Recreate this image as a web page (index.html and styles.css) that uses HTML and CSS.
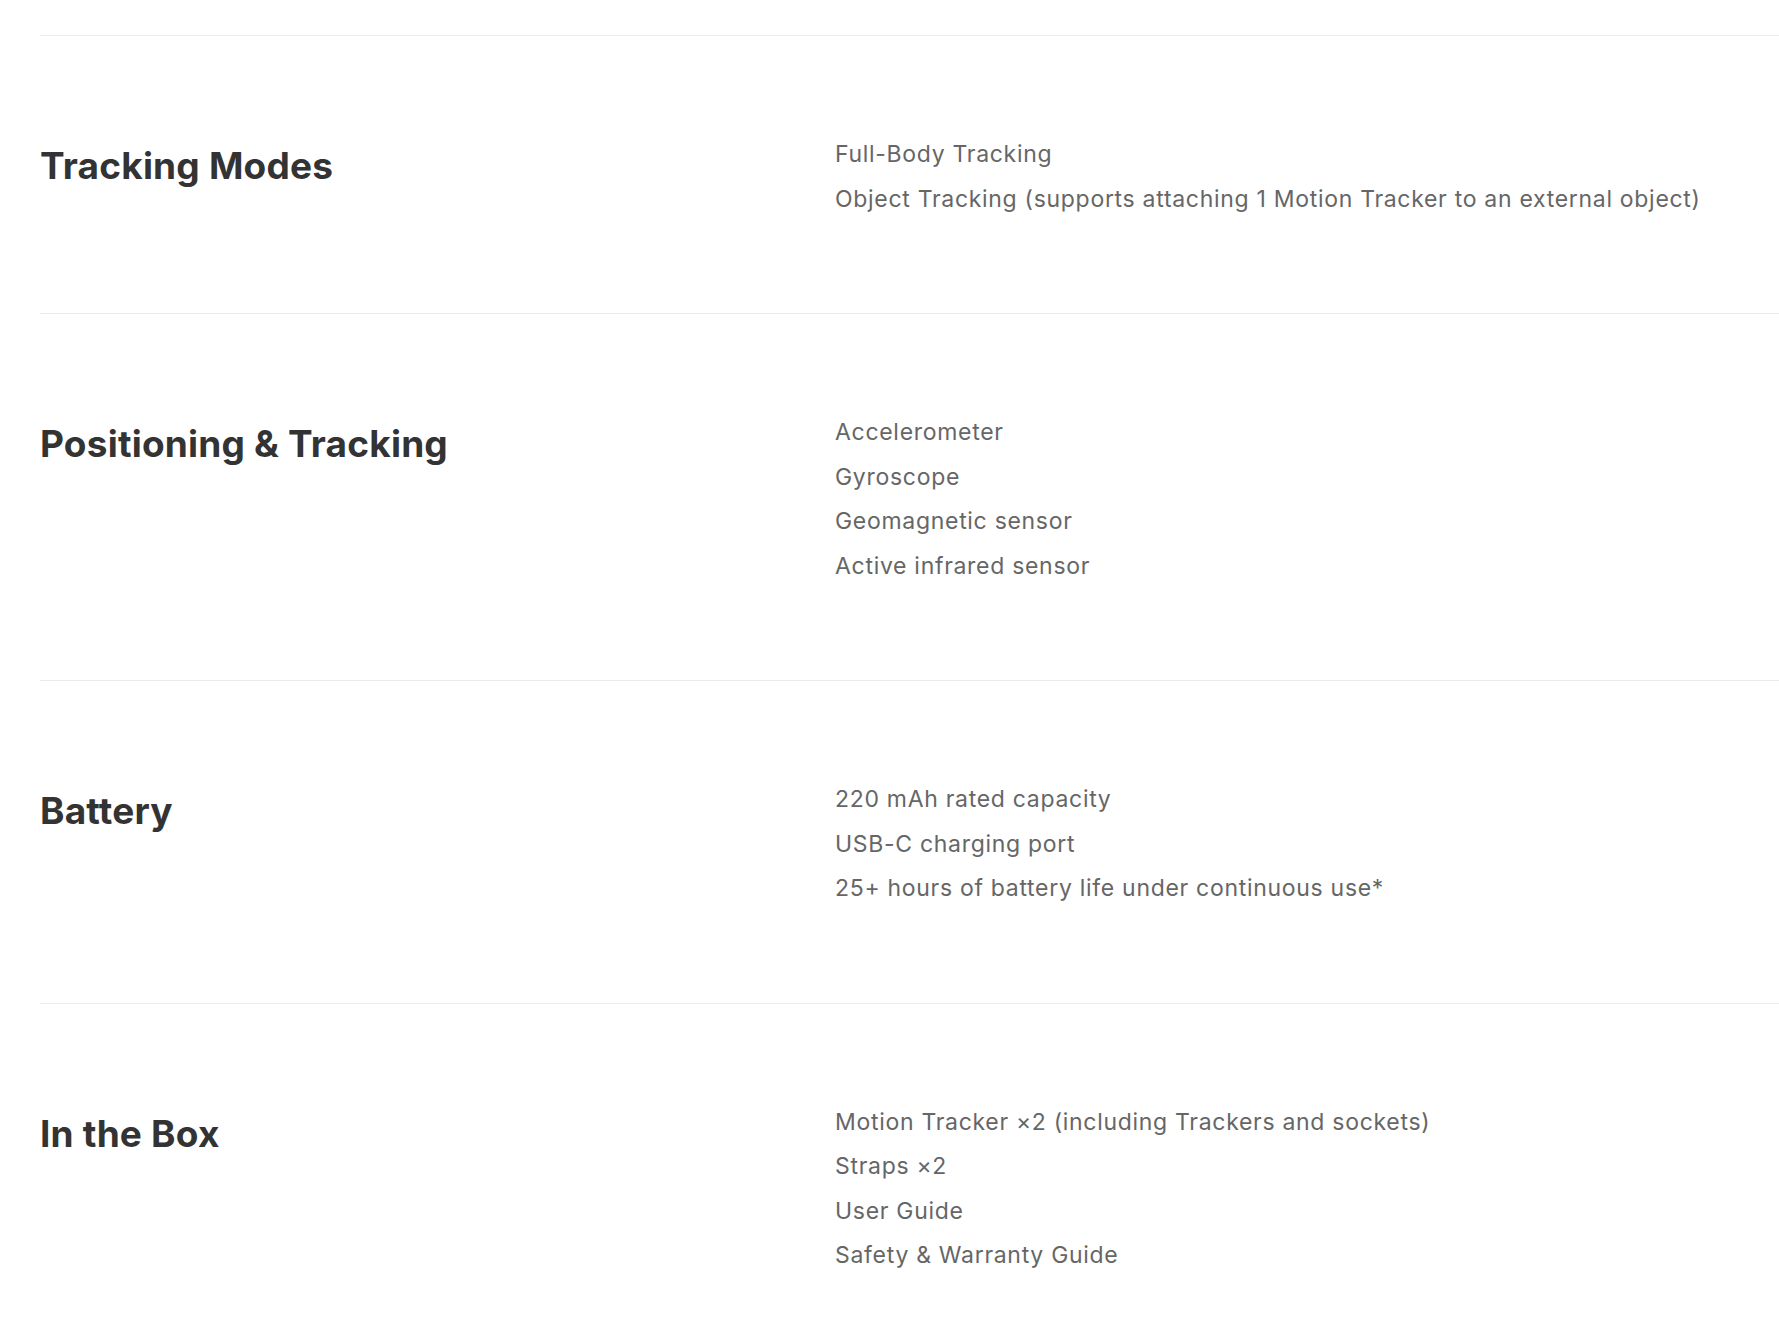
FILE: index.html
```html
<!DOCTYPE html>
<html lang="en">
<head>
<meta charset="utf-8">
<title>Specs</title>
<link rel="stylesheet" href="styles.css">
</head>
<body>
<main class="specs">
  <section class="spec-row">
    <h2 class="spec-title">Tracking Modes</h2>
    <ul class="spec-list">
      <li>Full-Body Tracking</li>
      <li>Object Tracking (supports attaching 1 Motion Tracker to an external object)</li>
    </ul>
  </section>
  <section class="spec-row">
    <h2 class="spec-title">Positioning &amp; Tracking</h2>
    <ul class="spec-list">
      <li>Accelerometer</li>
      <li>Gyroscope</li>
      <li>Geomagnetic sensor</li>
      <li>Active infrared sensor</li>
    </ul>
  </section>
  <section class="spec-row">
    <h2 class="spec-title">Battery</h2>
    <ul class="spec-list">
      <li>220 mAh rated capacity</li>
      <li>USB-C charging port</li>
      <li>25+ hours of battery life under continuous use*</li>
    </ul>
  </section>
  <section class="spec-row">
    <h2 class="spec-title">In the Box</h2>
    <ul class="spec-list">
      <li>Motion Tracker ×2 (including Trackers and sockets)</li>
      <li>Straps ×2</li>
      <li>User Guide</li>
      <li>Safety &amp; Warranty Guide</li>
    </ul>
  </section>
</main>
</body>
</html>
```

FILE: styles.css
```css
html, body {
  margin: 0;
  padding: 0;
  background: #ffffff;
}

body {
  font-family: Inter, "Noto Sans", "Liberation Sans", sans-serif;
  color: #333333;
}

.specs {
  padding: 35px 0 0 40px;
}

.spec-row {
  display: grid;
  grid-template-columns: 795px 1fr;
  align-items: start;
  border-top: 1px solid #ebebeb;
  padding: 96px 0 92px;
}

.spec-title {
  margin: 12px 0 0;
  font-size: 37px;
  line-height: 44px;
  font-weight: 700;
  color: #333333;
  letter-spacing: 0.2px;
}

.spec-list {
  list-style: none;
  margin: 0;
  padding: 0;
}

.spec-list li {
  font-size: 23px;
  line-height: 44.5px;
  letter-spacing: 0.7px;
  color: #666666;
}
```
